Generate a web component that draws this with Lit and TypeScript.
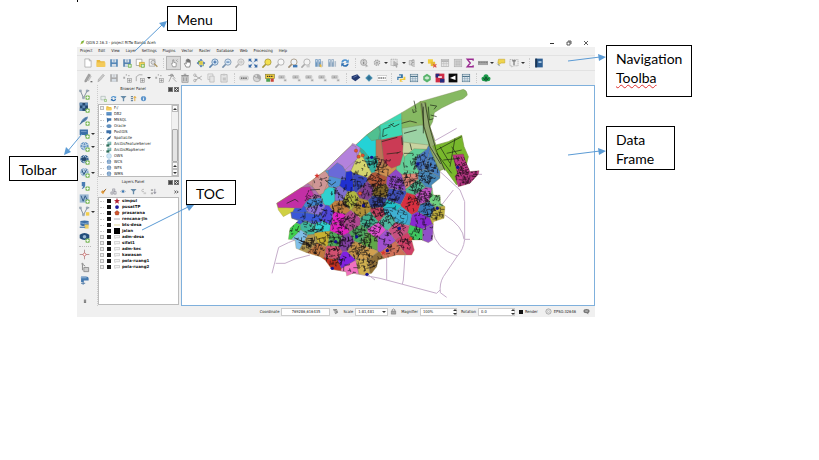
import { LitElement, html, svg, css } from "lit";
import { customElement, property } from "lit/decorators.js";

type Glyph = ReturnType<typeof svg>;

const plus = svg`<rect x="9.5" y="9.5" width="6" height="6" rx="1" fill="#7db95c"/><path d="M12.5 10.5v4M10.5 12.5h4" stroke="#fff" stroke-width="1.2"/>`;
const grayPlus = svg`<rect x="9" y="9" width="6" height="6" fill="#e4e4e4" stroke="#999"/><path d="M12 10v4M10 12h4" stroke="#888"/>`;
const lens = (fill: string, ring: string, mark: Glyph) => svg`<path d="M6 10L1.5 14.5" stroke="${ring}" stroke-width="2.6" stroke-linecap="round"/><circle cx="9.5" cy="6.5" r="5" fill="${fill}" stroke="${ring}" stroke-width="1.3"/>${mark}`;
const floppy = (c: string) => svg`<path d="M2 2h12v12H2z" fill="${c}"/><path d="M4.5 2h7v5h-7z" fill="#e8edf2"/><path d="M4.5 9.5h7V14h-7z" fill="#d5dde5"/><path d="M6 3.5h4M6 5.2h4" stroke="${c}" stroke-width=".8"/>`;
const label = (c: string) => svg`<rect x="1" y="4" width="10" height="5" rx="1" fill="#d8d8d8" stroke="#aaa" stroke-width=".7"/><path d="M2.5 6.5h7" stroke="#666" stroke-width="1.6" stroke-dasharray="1.6 .8"/><path d="M9 9h5v5H9z" fill="${c}"/><path d="M10 11.5h3" stroke="#666"/>`;
const globe = (c: string) => svg`<circle cx="8" cy="7.5" r="6" fill="${c}"/><path d="M3 5q5 3 10 0M2.5 9q5 3 11 0M8 1.5q-5 6 0 12q5-6 0-12" fill="none" stroke="#d9e6f2" stroke-width="1.1"/>`;
const book = (c: string) => svg`<path d="M2 2h4v12H2zM7 2h4v12H7z" fill="${c}"/><path d="M3 4h2M8 4h2M3 6h2M8 6h2" stroke="#fff"/><path d="M12 5h2.5v9H12z" fill="#b2bfcc"/>`;
const vee = svg`<path d="M2 2.5L6.5 13L12 2.5H15" fill="none" stroke="#6f7f8e" stroke-width="1.2"/><path d="M.8 1.3h2.6v2.6H.8zM10.6 1.3h2.6v2.6h-2.6zM5.2 11.6h2.6v2.6H5.2z" fill="#a9b9c8" stroke="#637586" stroke-width=".5"/>`;
const dbase = svg`<path d="M2 3q6-2 12 0v6q-6 2.5-12 0z" fill="#3c6ea5"/><path d="M2 5.5q6 2.5 12 0" stroke="#9fc0e0" fill="none"/>`;
const grid = svg`<rect x="2" y="2" width="12" height="12" fill="#eef3f7" stroke="#4b7188"/><path d="M2 5.5h12" stroke="#4b7188" stroke-width="2"/><path d="M2 9h12M2 11.6h12M6 5v9M10 5v9" stroke="#6f93a8" stroke-width=".8"/>`;

const glyphs: Record<string, Glyph> = {
  page: svg`<path d="M3 1.5h7l3 3v10H3z" fill="#fff" stroke="#999"/><path d="M10 1.5v3h3" fill="none" stroke="#999"/>`,
  folder: svg`<path d="M1 3h5l1.5 2H14v9H1z" fill="#e8b73c"/><path d="M1 7h14v7H1z" fill="#f4cb5a"/>`,
  save: floppy("#4e83b5"),
  saveAs: svg`${floppy("#4f7fae")}${plus}`,
  composer: svg`<path d="M2 2h9v10H2z" fill="#fff" stroke="#888"/><path d="M7 7h8v7H7z" fill="#f2d45c" stroke="#b79a2f"/>${plus}`,
  composers: svg`<path d="M2 2h9v11H2z" fill="#f5f5f5" stroke="#888"/><circle cx="8" cy="7" r="3.2" fill="#ddd" stroke="#888"/><path d="M10 9l5 5" stroke="#a98f53" stroke-width="2"/>`,
  touch: svg`<path d="M6 14L4 9l2-.5V3h1.7v4l4 1.2-.6 5.8z" fill="#fff" stroke="#777"/><path d="M11 3l3 3M13 2l1 1" stroke="#888"/>`,
  hand: svg`<path d="M5 14.5L2.3 9l1.3-1L5.2 9.500V3h1.600v4V1.700h1.700V7V2.400h1.700V7.300V4h1.600v6.500l-1.300 4z" fill="#fff" stroke="#444" stroke-width=".9"/>`,
  pan: svg`<path d="M8 1l3 3.500H5zM8 15l3-3.500H5zM1 8l3.500-3v6zM15 8l-3.500-3v6z" fill="#4673a6"/><path d="M5 5h6v6H5z" fill="#d9c84b"/><path d="M3 4l4 1-3 3zM10 13l3-4-1 4z" fill="#6da34b"/>`,
  zoomIn: lens("#d8e7f5", "#5d84ad", svg`<path d="M7 6.500h5M9.500 4v5" stroke="#2f62a0" stroke-width="1.500"/>`),
  zoomOut: lens("#d8e7f5", "#7590ad", svg`<path d="M7 6.500h5" stroke="#2f62a0" stroke-width="1.500"/>`),
  zoomNative: lens("#eee", "#b0b0b0", svg`<path d="M8 4v5M11 4v5" stroke="#999"/>`),
  zoomFull: svg`<path d="M1 1h5L4.500 3l2 2L5 6.500l-2-2L1 6zM15 1v5l-2-1.500-2 2L9.500 5l2-2L10 1zM1 15v-5l2 1.500 2-2L6.500 11l-2 2L6 15zM15 15h-5l1.500-2-2-2L11 9.500l2 2 2-1.500z" fill="#3a6ca8"/><circle cx="8" cy="8" r="2.300" fill="#c9dbed"/>`,
  zoomSel: lens("#f3e04e", "#a8983a", svg``),
  zoomLayer: lens("#f7f7f7", "#a8a8a8", svg``),
  zoomLast: svg`${lens("#eef3f8", "#a08f78", svg``)}<path d="M8 11h7v4H8z" fill="#3f78b6"/>`,
  zoomNext: svg`${lens("#f3f3f3", "#aaa", svg``)}<path d="M9 11h5v4H9z" fill="#ccc"/>`,
  bookmark: svg`${book("#6d97bf")}<path d="M9 9l3 2v4l-3-1z" fill="#e5b945"/>`,
  bookmarks: book("#8aa5bf"),
  refresh: svg`<path d="M2 7q1-5 6-5q3 0 4.300 2L14 2v5.500H8.800L10.600 5.600Q8 3.500 5.500 5.800L4.700 7z" fill="#4f93cf"/><path d="M14 9q-1 5-6 5q-3 0-4.300-2L2 14V8.500h5.200L5.400 10.400Q8 12.500 10.500 10.200L11.300 9z" fill="#2d6eb0"/>`,
  info: svg`<circle cx="7.500" cy="7" r="5" fill="#d2d2d2" stroke="#999"/><path d="M7.500 6v4M7.500 3.500v1" stroke="#777" stroke-width="1.500"/><path d="M10 9l5 4-3 .5-1 2z" fill="#aaa"/>`,
  gear: svg`<circle cx="8" cy="7.500" r="4" fill="#ddd" stroke="#a2a2a2" stroke-width="2.400" stroke-dasharray="2 1.100"/><circle cx="8" cy="7.500" r="1.500" fill="#999"/>`,
  select: svg`<path d="M1.500 2h10v10h-10z" fill="#e5e5e5" stroke="#999" stroke-dasharray="2 1"/><path d="M6 5l7 5-3 .5 1.500 4-1.500.5-1.500-4L6 13z" fill="#bbb" stroke="#888" stroke-width=".6"/>`,
  selectExp: svg`<path d="M2 4h8v7H2z" fill="#d9d9d9" stroke="#aaa"/><path d="M10 3q-4-1-4 2t3 2q-4 0-3.500 3.500T11 13" fill="none" stroke="#999" stroke-width="1.300"/>`,
  deselect: svg`<path d="M1.500 2h8v7h-8z" fill="#f1cf3e"/><path d="M6 6h7v7H6z" fill="#e6bb35"/><path d="M10 10l5 5M15 10l-5 5" stroke="#dc5347" stroke-width="1.700"/>`,
  table: svg`<rect x="2" y="2.500" width="12" height="11" fill="#e8e8e8" stroke="#aaa"/><path d="M2 5h12" stroke="#b5b5b5" stroke-width="3"/><path d="M2 9h12M6 5v8M10 5v8" stroke="#bbb"/>`,
  calc: svg`<rect x="2" y="2" width="12" height="12" fill="#ddd" stroke="#aaa"/><path d="M4 5h8M4 8h8M4 11h8" stroke="#999" stroke-width="1.500" stroke-dasharray="2 1"/>`,
  sigma: svg`<path d="M13 4.500V2H3.500l5 6-5 6H13v-2.500" fill="none" stroke="#9a2b91" stroke-width="2.200"/>`,
  ruler: svg`<path d="M0 5.500h16v5H0z" fill="#a5a5a5" stroke="#777" stroke-width=".7"/><path d="M2 6v2M5 6v2M8 6v2M11 6v2M14 6v2" stroke="#444" stroke-width=".8"/>`,
  tip: svg`<path d="M4 2h10v6H8l-4 3 .5-3H3z" fill="#efd44e" stroke="#c9ab33"/><path d="M2 9l4 4" stroke="#7d93a8" stroke-width="1.500"/>`,
  text: svg`<path d="M1.500 2.500h13v10h-7l-3 2v-2h-3z" fill="#eee" stroke="#999" stroke-dasharray="2 1"/><path d="M5 4.500h6M8 4.500v7" stroke="#555" stroke-width="1.500"/>`,
  help: svg`<path d="M2 1h12v14H2z" fill="#2e5f93"/><path d="M2 1h3v14H2z" fill="#1c3654"/><path d="M7 5h5v3H7z" fill="#a9c6e0"/>`,
  edits: svg`<path d="M3 12L9 1.500l3 1.500-6 10.500-3 1z" fill="#a5a5a5" stroke="#777" stroke-width=".7"/><path d="M7 12l5-8 2 1-5 8z" fill="#c3c3c3"/><path d="M12 14h3" stroke="#333" stroke-width="1.500"/>`,
  pencil: svg`<path d="M3 14l1-4 7-8 2.500 2-7 8z" fill="#c9c9c9" stroke="#999" stroke-width=".8"/>`,
  saveEdits: floppy("#a8a8a8"),
  addPts: svg`<path d="M2 6h3v3H2zM6 2h2v2H6zM10 3h2v2h-2z" fill="#aaa"/>${grayPlus}`,
  addCurve: svg`<path d="M2 13V6q4-5 10-3" fill="none" stroke="#aaa" stroke-width="1.500"/>${grayPlus}`,
  node: svg`<path d="M3 14L8 3l5 6M2 4h9" stroke="#999" fill="none" stroke-width="1.300"/><path d="M6 2h3v3H6zM9 8l6 6" fill="#bbb" stroke="#888"/>`,
  trash: svg`<path d="M3 5h10v10H3z" fill="#d1d1d1" stroke="#888"/><path d="M2 4h12M6 2h4M6 7v6M10 7v6" stroke="#888" stroke-width="1.400"/>`,
  cut: svg`<path d="M3 4l11 7M3 12l11-7" stroke="#aaa" stroke-width="1.500"/><circle cx="3" cy="3.500" r="2" fill="none" stroke="#999"/><circle cx="3" cy="12" r="2" fill="none" stroke="#999"/>`,
  copy: svg`<path d="M3 1.500h8v9H3z" fill="#ececec" stroke="#b5b5b5"/><path d="M6 5h7v9.500H6z" fill="#e5e5e5" stroke="#b0b0b0"/>`,
  paste: svg`<path d="M3 2.500h10v12H3z" fill="#e5e5e5" stroke="#aaa"/><path d="M6 1h4v3H6zM6 7h5v5H6z" fill="#c5c5c5"/>`,
  abc: svg`<rect x="1" y="5" width="14" height="6" rx="2" fill="#ddd" stroke="#bbb"/><path d="M3 8h10" stroke="#555" stroke-width="2" stroke-dasharray="2.500 1"/>`,
  pie: svg`<circle cx="8" cy="8" r="6" fill="#d7d7d7" stroke="#999"/><path d="M8 8V2A6 6 0 0 1 13 11z" fill="#aaa"/><path d="M8 8L3 5" stroke="#888"/>`,
  labelHi: svg`<rect x="1" y="2" width="14" height="7" fill="#f3cf3c" stroke="#867a2d"/><path d="M3 5.500h10" stroke="#333" stroke-width="2" stroke-dasharray="2 1"/><path d="M2 9h6v5H2z" fill="#50a052"/><path d="M9 9h5v5H9z" fill="#c94539"/>`,
  labelA: label("#ddd"),
  chip: svg`<path d="M1 5l9-3 5 5-8 6-6-4z" fill="#243a70"/><path d="M4 7l6-3" stroke="#6179ae" stroke-width="1.500"/>`,
  diamond: svg`<path d="M8 2l6 6-6 6-6-6z" fill="#4d91b0"/><path d="M8 4.500L11.500 8 8 11.500 4.500 8z" fill="#2f6e93"/>`,
  csw: svg`<rect x="0" y="4" width="16" height="8" fill="#fff" stroke="#bbb"/><path d="M2 8h12" stroke="#777" stroke-width="2.500" stroke-dasharray="2.500 1"/>`,
  python: svg`<path d="M5 2h6v6H4v3H2V6h6V4H5z" fill="#3a77a8"/><path d="M11 14H6V9h6V6h3v5H9v2h2z" fill="#f0c93e"/>`,
  grid,
  green: svg`<path d="M8 1l6 4v6l-6 4-6-4V5z" fill="#58b36b"/><path d="M4 8q4-6 8 0q-4 5-8 0" fill="#cde9d2"/>`,
  plugin: svg`<path d="M1 1h14v14H1z" fill="#cf2c45"/><path d="M1 1h6v6H1zM8 9h7v6H8z" fill="#262b7c"/><path d="M5 5h6v3H5z" fill="#f0d9de"/>`,
  dark: svg`<path d="M1 1h14v14H1z" fill="#0a0a0a"/><path d="M3 8l9-4v7z" fill="#fff"/>`,
  tree: svg`<path d="M1 10q-1-4 3-4q0-4 4-4t4 4q4 0 3 4q0 3-4 3H5q-4 0-4-3z" fill="#1f9b4c"/><path d="M4 8l2 3 2-5 2 5 2-3M8 10v4" stroke="#0c4424" fill="none" stroke-width="1.300"/>`,
  vector: svg`${vee}${plus}`,
  raster: svg`<path d="M1 1h12v12H1z" fill="#23476e"/><path d="M1 1h4v4H1zM9 1h4v4H9zM5 5h4v4H5zM1 9h4v4H1z" fill="#6590bb"/>${plus}`,
  feather: svg`<path d="M1 14Q4 3 13 2Q13 8 5 11z" fill="#5f89b5"/><path d="M1 14L11 4" stroke="#32587f" />${plus}`,
  postgis: svg`<path d="M1 2h12v8l-3 3-2-3H1z" fill="#3b6fa8"/><path d="M3 5h8" stroke="#8db1d5"/>${plus}`,
  elephant: svg`<path d="M1 3h13v8l-4 3-2-3H1z" fill="#3b6fa8"/>`,
  wms: svg`${globe("#6292c0")}${plus}`,
  wcs: svg`${globe("#2f5f8f")}<path d="M4 5h7v5H4z" fill="#24476c"/>${plus}`,
  wfs: svg`${globe("#85aacb")}<path d="M4 4l3 7 4-7" stroke="#28527e" fill="none" stroke-width="1.400"/>${plus}`,
  comma: svg`<path d="M4 3h5v5q0 3-4 5l-1-1q2-1 2-3H4z" fill="#4a7db3"/>${plus}`,
  virtual: svg`<path d="M1 2h13v12H1z" fill="#9ab7d2"/><path d="M3 4l3 8 3-8 4 8" stroke="#355f89" fill="none" stroke-width="1.400"/>${plus}`,
  newVec: svg`${vee}<path d="M10 9h5v5h-5z" fill="#f2ce4b"/>`,
  gps: svg`${dbase}<path d="M8 8h6v6H8z" fill="#efcf64"/><path d="M1 12h8" stroke="#5a86b3" stroke-width="2"/>`,
  globeDark: svg`<path d="M1 4q7-5 14 0v5q-7 5-14 0z" fill="#234e7b"/><circle cx="8" cy="7" r="2.600" fill="#97b6d3"/>${plus}`,
  cross: svg`<path d="M8 1v5M8 10v5M1 8h5M10 8h5" stroke="#b38b8b" stroke-width="1.300"/><circle cx="8" cy="8" r="2" fill="#fff" stroke="#c55"/>`,
  snap: svg`<path d="M5 2v10M5 3l4 3" stroke="#888" stroke-width="1.400" fill="none"/><circle cx="5" cy="2.500" r="1.500" fill="#999"/><path d="M7 8h7v6H7z" fill="#ccc" stroke="#777"/>`,
  dbTool: svg`<path d="M3 2h7q4 0 4 3v3H7v2H3z" fill="#4479b0"/><path d="M2 4h9" stroke="#b5cfe8"/><path d="M6 10v4M3 12h6" stroke="#567ea9" stroke-width="1.500"/>`,
  addLayer: svg`<path d="M2 3h10v8H2z" fill="#e8eeea" stroke="#899"/>${plus}`,
  filter: svg`<path d="M1 2h14L9.500 8v6h-3V8z" fill="#678ba8"/>`,
  collapse: svg`<path d="M2 2h5v3H2zM2 7h5v2H2zM2 11h5v3H2z" fill="#6b87a0"/><path d="M11 14V4M8.500 7L11 3l3 4" stroke="#e0a32e" stroke-width="2" fill="none"/>`,
  about: svg`<circle cx="8" cy="8" r="6" fill="#5e95cb"/><path d="M8 7v5M8 4v1.500" stroke="#fff" stroke-width="1.800"/>`,
  brush: svg`<path d="M2 9l5 5L14 3l-5 4-3-2z" fill="#e09b3d"/><path d="M8 8l6-6" stroke="#8f5b2a" stroke-width="2"/>`,
  group: svg`<path d="M2 9h5v5H2zM6 2h5v5H6zM9 8h5v6H9z" fill="#e2e2e2" stroke="#667"/>`,
  eye: svg`<path d="M1 8q6-7 12 0q-6 6-12 0" fill="#dde6ee" stroke="#8895a2"/><circle cx="7" cy="8" r="2.600" fill="#3a78b5"/>`,
  expr: svg`<path d="M9 3Q4 2 4 6t5 2" fill="none" stroke="#aaa" stroke-width="1.600"/><path d="M8 10h6v4H8z" fill="#ccc"/>`,
  expand: svg`<path d="M2 3h5v4H2zM2 10h5v4H2z" fill="#aaa"/><path d="M11 2v10M8.500 9L11 13l3-4" stroke="#778" stroke-width="1.600" fill="none"/>`,
  db: svg`<path d="M1 3h14v9H1z" fill="#4f86be"/><path d="M1 6h14" stroke="#9cc0e4"/>`,
  flag: svg`<path d="M2 1l3 2h9v7H8l-5 5z" fill="#3f72a8"/>`,
  disk: svg`<ellipse cx="8" cy="8" rx="7" ry="5" fill="#5586b8"/><path d="M2 8h12" stroke="#a9c7e4"/>`,
  quill: svg`<path d="M1 15L5 7l9-6-3 8z" fill="#36658f"/>`,
  arc: svg`<path d="M4 2h10v9H4z" fill="#69a8a1"/><path d="M1 9h8v6H1z" fill="#2f6c58"/><path d="M6 5h6" stroke="#e6f2f0" stroke-width="2"/>`,
  ows: svg`<circle cx="8" cy="8" r="6.500" fill="#cfe6f6" stroke="#7eb3d8"/>`,
  world: globe("#4d7fb3"),
  star: svg`<path d="M8 0l2.200 5.600 5.800.3-4.500 3.700 1.500 6L8 12.300 3 15.600l1.500-6L0 5.900l5.800-.3z" fill="#b21f30"/>`,
  dot: svg`<circle cx="8" cy="8" r="5" fill="#1d1a9c"/>`,
  hex: svg`<path d="M8 1.500l6 4.500-2 7H4L2 6z" fill="#d2552f" stroke="#7a2f18"/>`,
  lineGray: svg`<path d="M0 8h16" stroke="#8a8a9a" stroke-width="1.800"/>`,
  lineGold: svg`<path d="M0 8h16" stroke="#d3c36a" stroke-width="1.800"/>`,
  square: svg`<path d="M0 0h16v16H0z" fill="#000"/>`,
  poly: svg`<path d="M1 4h14v6H6l-4 2z" fill="#f4f4f4" stroke="#999"/>`,
  lock: svg`<path d="M3 7h10v7H3z" fill="#a8a8a8" stroke="#666"/><path d="M5 7V4q3-4 6 0v3" fill="none" stroke="#777" stroke-width="1.600"/>`,
  extent: svg`<path d="M2 3l9-1 3 8-6 4z" fill="#888"/><path d="M4 5l6 7M4 9l8-4" stroke="#eee"/>`,
  crs: svg`<circle cx="8" cy="8" r="6" fill="#eee" stroke="#888" stroke-width="1.500"/><circle cx="8" cy="8" r="2.500" fill="none" stroke="#999"/>`,
  bubble: svg`<ellipse cx="8" cy="7" rx="7" ry="5" fill="#777"/><path d="M8 11l4 4v-5z" fill="#777"/><path d="M5 7h6" stroke="#fff" stroke-width="1.500"/>`,
  logo: svg`<path d="M2 13L5 4l9-3-4 9z" fill="#69b33f"/><path d="M2 14l8-9" stroke="#d9b92e" stroke-width="2"/>`,
  chevrons: svg`<path d="M3 6l4 3-4 3M8 6l4 3-4 3" stroke="#333" stroke-width="1.600" fill="none"/>`,
  more: svg`<path d="M5 3h6M5 6h6M5 9h6" stroke="#333" stroke-width="1.800"/>`,
};

const icon = (name: string) => html`<svg class="icon" viewBox="0 0 16 16" aria-hidden="true">${glyphs[name]}</svg>`;

/* A leading "v:" on a name gives the tool a drop-down arrow. */
interface ToolGroup { width: number; tools: string[]; }

const navGroups: ToolGroup[] = [
  { width: 79, tools: "page folder save saveAs composer composers".split(" ") },
  { width: 186, tools: "touch hand pan zoomIn zoomOut zoomNative zoomFull zoomSel zoomLayer zoomLast zoomNext bookmark bookmarks refresh".split(" ") },
  { width: 168, tools: "info v:gear v:select v:selectExp deselect table calc sigma v:ruler tip v:text".split(" ") },
  { width: 13, tools: ["help"] },
];
const editGroups: ToolGroup[] = [
  { width: 150, tools: "edits pencil saveEdits addPts v:addCurve addPts node trash cut copy paste".split(" ") },
  { width: 106, tools: "abc pie labelHi labelA labelA labelA labelA labelA".split(" ") },
  { width: 39, tools: "chip diamond csw".split(" ") },
  { width: 79, tools: "python grid green plugin dark grid".split(" ") },
  { width: 13, tools: ["tree"] },
];
const layerTools = "vector raster feather v:postgis v:wms wcs v:wfs comma virtual v:newVec gps globeDark".split(" ");
const extraTools = "cross snap dbTool".split(" ");

const menus = ["Project", "Edit", "View", "Layer", "Settings", "Plugins", "Vector", "Raster", "Database", "Web", "Processing", "Help"];
const sources: [string, string][] = [
  ["folder", "F:/"], ["db", "DB2"], ["flag", "MSSQL"], ["disk", "Oracle"], ["elephant", "PostGIS"], ["quill", "SpatiaLite"],
  ["arc", "ArcGisFeatureServer"], ["arc", "ArcGisMapServer"], ["ows", "OWS"], ["world", "WCS"], ["world", "WFS"], ["world", "WMS"],
];
const layers: [string, string][] = [
  ["star", "simpul"], ["dot", "pusatTP"], ["hex", "prasarana"], ["lineGray", "rencana-jln"], ["lineGold", "bts-desa"], ["square", "jalan"],
  ["poly", "adm-desa"], ["poly", "sifat1"], ["poly", "adm-kec"], ["poly", "kawasan"], ["poly", "pola-ruang1"], ["poly", "pola-ruang2"],
];

/* Map: each district is a cell around its centre; the last number is street density. */
type Point = [number, number];
const districts: [number, number, string, number][] = [
  [45, 205, "#cfd043", 0], [128, 168, "#b06fb0", 5], [155, 130, "#cf9090", 3], [190, 120, "#4f93d6", 0], [225, 60, "#b482dc", 0],
  [280, 85, "#d4d56e", 7], [180, 165, "#30d0d0", 1], [210, 165, "#8070d0", 8], [235, 130, "#2030d0", 2], [265, 128, "#3848b8", 8],
  [130, 185, "#4088d0", 7], [135, 210, "#8a70d8", 9], [170, 230, "#5048d8", 8], [90, 228, "#3a58d8", 2], [125, 235, "#4a60d8", 3],
  [70, 270, "#40d050", 3], [92, 292, "#80c0e8", 7], [115, 262, "#40b8a0", 7], [155, 260, "#30d0d0", 8], [205, 235, "#e020c0", 13],
  [208, 265, "#e020c0", 9], [238, 180, "#b0b840", 15], [212, 200, "#c08040", 12], [243, 243, "#b04890", 16], [275, 205, "#b09038", 15],
  [308, 70, "#30b0a0", 14], [338, 80, "#d09050", 14], [320, 125, "#b05838", 16], [290, 150, "#804090", 10], [330, 155, "#806828", 18],
  [325, 185, "#3848a0", 20], [375, 165, "#4050b8", 20], [380, 130, "#9048c8", 20], [422, 118, "#e08878", 16], [420, 85, "#62cf98", 4],
  [450, 65, "#4878c0", 16], [490, 75, "#4880c0", 16], [468, 115, "#4888b8", 16], [440, 140, "#50b890", 14], [460, 168, "#c050c0", 18],
  [425, 190, "#d83040", 10], [500, 178, "#70d080", 10], [505, 222, "#c0b040", 12], [472, 208, "#3878b8", 12], [453, 243, "#8828d0", 8],
  [328, 220, "#c04060", 16], [300, 242, "#40b090", 14], [352, 240, "#50b8a0", 12], [392, 232, "#40a8d0", 5], [360, 205, "#20c0c8", 5],
  [440, 285, "#40c860", 8], [475, 285, "#9050c8", 3], [318, 272, "#e050d0", 10], [345, 300, "#a050d0", 8], [385, 270, "#c85080", 13],
  [408, 305, "#d04068", 14], [370, 335, "#d07058", 8], [270, 285, "#50a860", 15], [298, 300, "#60a848", 13], [195, 298, "#50a858", 15],
  [158, 292, "#c8b030", 8], [120, 308, "#b09850", 15], [140, 330, "#c07840", 15], [192, 340, "#d05070", 14], [185, 375, "#c03020", 7],
  [228, 310, "#8040a0", 13], [228, 358, "#8020e0", 6], [245, 388, "#f070c0", 4], [283, 340, "#d0a050", 12], [282, 380, "#d0b050", 6],
  [312, 375, "#907038", 12], [255, 330, "#c09048", 12],
];
const coast: Point[] = [
  [20, 190], [95, 142], [130, 118], [165, 92], [200, 58], [245, 15], [247, 10], [258, 14], [290, -15], [330, -45], [395, -62], [470, -40], [480, 0], [495, 40],
  [510, 75], [510, 115], [485, 135], [490, 165], [510, 165], [512, 190], [525, 200], [522, 235], [490, 245], [488, 300], [475, 308], [455, 300], [425, 300],
  [433, 330], [425, 345], [380, 345], [325, 360], [320, 380], [305, 400], [285, 405], [250, 400], [230, 408], [228, 395], [185, 388],
  [165, 360], [150, 350], [110, 338], [78, 325], [75, 300], [55, 298], [60, 265], [85, 242], [65, 235], [62, 218], [40, 230], [25, 210],
];
const zones: [string, string][] = [
  ["M20 190L95 142L120 140L132 165L108 185L95 205L48 203L25 203Z", "#c22fa5"],
  ["M62 216L105 218L155 226L155 248L108 242L66 235Z", "#3a58d8"],
  ["M130 118L165 92L178 108L172 130L160 160L148 165L128 140Z", "#cf9696"],
  ["M165 92L200 58L245 15L258 20L262 56L225 90L200 70L180 90Z", "#b482dc"],
  ["M175 92L202 68L218 78L228 95L225 120L205 115L175 108Z", "#6a6ad8"],
  ["M258 14L290 -15L325 -40L318 -2L318 50L298 52L280 30Z", "#24d2d6"],
  ["M290 -15L325 -40L330 -25L325 -2L305 2Z", "#50c090"],
  ["M318 0L334 -2L340 55L335 85L318 50Z", "#b97558"],
  ["M330 -45L395 -82L398 -12L334 0Z", "#3dd8b4"],
  ["M334 0L396 -14L402 35L397 50L390 75L365 85L342 68Z", "#cb3b55"],
  ["M395 -82L450 -115L580 -152Q592 -148 592 -135Q580 -120 560 -118L515 -96L493 -82L488 -55L478 -35L396 -22Z", "#86b962"],
  ["M396 -35L465 -47L478 -12L476 18L400 8Z", "#9bd2a4"],
  ["M400 6L476 15L470 28L430 30L405 55L398 35Z", "#c9d3a0"],
  ["M404 50L432 26L470 28L440 50L432 95L402 90Z", "#62cf98"],
];
const eastZones: [string, string][] = [
  ["M450 -115L468 -112L478 -45L512 60L528 85L508 92L482 30L462 -35Z", "#93aa70"],
  ["M488 18L535 5L575 -14L582 20L595 50L585 90L560 135L520 80Z", "#78b82c"],
];
const eastTown = "M548 45L580 42L585 60L600 95L627 92L625 102L600 130L565 140L555 110L562 100Z";
const roads = [
  "M6 400L20 345L26 322L55 308L80 298", "M17 370H45L75 357L120 345", "M480 -38L495 2L560 -35", "M505 90L570 150L584 185V298H600",
  "M584 298Q580 330 562 348L520 410Q508 430 511 458L530 472", "M510 450L500 460L330 415L190 388",
  "M488 270Q495 325 562 348", "M525 225Q580 260 582 298", "M515 195L550 150", "M350 350V420", "M405 345L400 420L397 432", "M295 405L315 420", "M620 103H636",
];
const blackRoads = [
  "M455 -110L462 -40L480 20L512 72", "M465 -112L478 -42L498 30L525 92", "M395 -8L397 15M335 5L382 -8M355 -42L372 -50M380 40L392 35",
  "M362 -40L340 -32L338 -10L352 -16M362 -48L372 -40L388 -48M402 -20L440 -30M420 10L425 30M440 -85L435 -92M428 -92L430 -82L438 -85",
  "M402 40H430M350 42L385 38M432 -118L438 -92M460 -100V-20M475 -100L478 -60M480 -105L500 -102L492 -92M395 -50L420 -57L440 -52M478 -60L490 -64M482 -75L500 -70",
  "M500 30L575 -10M510 20L540 70M530 40L575 30M520 60L570 55M555 -5L540 80M500 40L545 100M545 20L560 42",
  "M50 190L75 178L85 185M105 215V235M165 120L185 135L198 125M120 150L150 148",
];
const capitals: Point[] = [[305, 52], [153, 196], [280, 197], [444, 72], [563, 82], [502, 205], [388, 265], [197, 305], [352, 332], [187, 385], [291, 403], [260, 290]];
const facilities: Point[] = [[258, 32], [266, 50], [278, 46], [270, 160], [422, 296]];
const hubs: Point[] = [[141, 107], [340, 338]];

const toPath = (points: Point[]) => `M${points.map((p) => p.join(" ")).join("L")}Z`;

/* Cuts the starting box down to the part nearer to district i than to any other. */
function cell(i: number): Point[] {
  let poly: Point[] = [[0, -80], [550, -80], [550, 420], [0, 420]];
  const [ax, ay] = districts[i];
  districts.forEach(([bx, by], j) => {
    if (i === j) return;
    const side = (p: Point) => (p[0] - (ax + bx) / 2) * (bx - ax) + (p[1] - (ay + by) / 2) * (by - ay);
    const next: Point[] = [];
    poly.forEach((p, k) => {
      const q = poly[(k + 1) % poly.length];
      const a = side(p), b = side(q);
      if (a <= 0) next.push(p);
      if (a * b < 0) {
        const t = a / (a - b);
        next.push([Math.round(p[0] + (q[0] - p[0]) * t), Math.round(p[1] + (q[1] - p[1]) * t)]);
      }
    });
    poly = next;
  });
  return poly;
}

function streets(centres: [number, number, number][]): string {
  let seed = 7;
  const rnd = () => ((seed = (seed * 16807) % 2147483647) / 2147483647);
  let d = "";
  for (const [x, y, n] of centres) {
    const tilt = rnd() * 0.9 - 0.45;
    for (let i = 0; i < n * 1.7; i++) {
      const turn = tilt + (rnd() > 0.5 ? Math.PI / 2 : 0);
      const px = x + (rnd() - 0.5) * 42 - 4, py = y + (rnd() - 0.5) * 40 - 4;
      const l = 4 + rnd() * 11, s = (rnd() - 0.5) * 14;
      const c = Math.cos(turn), q = Math.sin(turn);
      d += `M${px.toFixed(0)} ${py.toFixed(0)}l${(c * l).toFixed(0)} ${(q * l).toFixed(0)}l${(-q * s).toFixed(0)} ${(c * s).toFixed(0)}`;
    }
  }
  return d;
}

@customElement("city-map")
class CityMap extends LitElement {
  static styles = css`
    :host { display: block; min-width: 0; background: #fff; }
    .map { display: block; width: 100%; height: 100%; }
  `;
  render() {
    return html`<svg class="map" viewBox="-264 -162 1236 657" role="img" aria-label="District map of Banda Aceh">
      <defs><clipPath id="city"><path d=${toPath(coast)} /></clipPath><clipPath id="town"><path d=${eastTown} /></clipPath></defs>
      <g fill="none" stroke="#c6aecb" stroke-width="3">${roads.map((d) => svg`<path d=${d} />`)}</g>
      <g clip-path="url(#city)">
        ${districts.map((d, i) => svg`<path d=${toPath(cell(i))} fill=${d[2]} stroke="#6b6848" stroke-width="1" />`)}
      </g>
      <g stroke="#777b50" stroke-width="1">${zones.map(([d, fill]) => svg`<path d=${d} fill=${fill} />`)}</g>
      <path d="M340 205Q372 198 380 210T410 218Q418 235 405 252L380 235L345 222Z" fill="#3fb0d2" stroke="#207080" stroke-width="2" />
      <g clip-path="url(#city)"><path d=${streets(districts.map(([x, y, , n]) => [x, y, n]))} fill="none" stroke="#120e14" stroke-width="2" opacity=".85" /></g>
      <path d=${toPath(coast)} fill="none" stroke="#a89858" stroke-width="1" />
      <g stroke="#77933c" stroke-width="2">${eastZones.map(([d, fill]) => svg`<path d=${d} fill=${fill} />`)}</g>
      <path d=${eastTown} fill="#b83684" stroke="#704030" stroke-width="1" />
      <g clip-path="url(#town)"><path d=${streets([[572, 65, 10], [580, 95, 14], [590, 115, 14], [608, 108, 8]])} fill="none" stroke="#2a1020" stroke-width="2" /></g>
      <g fill="none" stroke="#1b2414" stroke-width="2">${blackRoads.map((d) => svg`<path d=${d} />`)}</g>
      ${capitals.map(([x, y]) => svg`<circle cx=${x} cy=${y} r="5" fill="#14148c" />`)}
      ${facilities.map(([x, y]) => svg`<circle cx=${x} cy=${y} r="5" fill="#e2542c" stroke="#8a2d18" />`)}
      ${hubs.map(([x, y]) => svg`<path transform="translate(${x - 8} ${y - 8})" d="M8 0l2 5.600 6 .3-4.500 3.700 1.500 6L8 12.300 3 15.600l1.500-6L0 5.900l6-.3z" fill="#d6372f" />`)}
    </svg>`;
  }
}

@customElement("gis-window")
class GisWindow extends LitElement {
  static styles = css`
    :host { display: block; background: #f0f0f0; font: 4px/6px "DejaVu Sans Condensed", "DejaVu Sans", sans-serif; color: #222; }
    * { box-sizing: border-box; }
    button { border: 0; padding: 0; margin: 0; background: none; font: inherit; color: inherit; display: flex; align-items: center; justify-content: center; }
    ul { list-style: none; margin: 0; padding: 0; }
    .icon { width: 10px; height: 10px; flex: none; display: block; }
    .title { display: flex; align-items: center; height: 9px; background: #fff; padding: 0 4px 0 3px; }
    .title .icon { width: 5px; height: 5px; margin-right: 1px; }
    .title .name { flex: 1; }
    .controls { display: flex; gap: 7px; }
    .controls button { width: 10px; height: 8px; }
    .controls .icon { width: 6px; height: 6px; margin: 0; }
    .menus { display: flex; gap: 6px; height: 8px; padding: 0 3px; align-items: center; }
    .bar { display: flex; align-items: center; height: 15px; padding-left: 4px; gap: 3px; border-top: 1px solid #e2e2e2; }
    .group { display: flex; align-items: center; flex: none; }
    .tool { flex: 1 1 0; height: 14px; min-width: 0; }
    .tool.menu { flex-grow: 1.4; gap: 2px; }
    .tool.on { background: #dadada; border: 1px solid #b4b4b4; }
    .caret { width: 0; height: 0; border: 2px solid transparent; border-top-color: #333; border-bottom: 0; flex: none; }
    .rule { border-left: 1px dotted #ccc; height: 10px; margin-right: -1px; }
    .work { display: grid; grid-template-columns: 20px 84px minmax(0, 1fr); }
    .side { display: flex; flex-direction: column; padding: 3px 0 0 2px; }
    .side .tool { flex: none; height: 13px; width: 18px; justify-content: flex-start; gap: 1px; }
    .side .tool .icon { width: 11px; height: 11px; }
    .side hr { border: 0; border-top: 1px dotted #bbb; width: 12px; margin: 2px 0 1px; }
    .side .more { width: 12px; margin-top: 12px; }
    .more .icon { width: 6px; height: 6px; }
    .docks { display: flex; flex-direction: column; gap: 1px; border-left: 1px dotted #ccc; }
    .head { display: flex; align-items: center; height: 8px; padding-right: 1px; }
    .head .name { flex: 1; text-align: center; }
    .head button { width: 5px; height: 5px; border: 1px solid #777; margin-right: 1px; background: #ddd; }
    .head .icon { width: 3px; height: 3px; }
    .tools { display: flex; align-items: center; height: 11px; }
    .tools button { width: 10px; height: 10px; }
    .tools .icon { width: 7px; height: 7px; }
    .tools .end { margin-left: auto; }
    .box { display: flex; background: #fff; border: 1px solid #bbb; margin-right: 2px; overflow: hidden; }
    .box ul { flex: 1; }
    .sources { height: 73px; }
    .layers { height: 108px; }
    .row { display: flex; align-items: center; height: 6px; padding-left: 1px; }
    .row .icon { width: 6px; height: 6px; margin-right: 2px; }
    .row label { font-weight: bold; font-family: "DejaVu Sans", sans-serif; color: #111; display: flex; align-items: center; }
    .row label .icon { margin: 0 2px 0 1px; }
    .branch { width: 4px; border-top: 1px dotted #ccc; margin-right: 2px; }
    .branch.plus { height: 4px; border: 1px solid #bbb; background: #eee; }
    .check { appearance: none; width: 4px; height: 4px; margin: 0 2px 0 1px; background: #111; flex: none; }
    .scroll { width: 7px; display: flex; flex-direction: column; background: #f1f1f1; border-left: 1px solid #ddd; }
    .scroll button { height: 7px; border: 1px solid #bbb; background: #fafafa; }
    .scroll .thumb { height: 33px; margin-top: 17px; border: 1px solid #aaa; background: #e4e4e4; border-radius: 1px; }
    .up { transform: rotate(180deg); }
    .frame { border: 1px solid #7fb0dc; background: #fff; height: 221px; min-width: 0; }
    .frame city-map { height: 100%; }
    .status { display: flex; align-items: center; justify-content: flex-end; height: 11px; padding: 0 5px; gap: 2px; }
    .status label { display: flex; align-items: center; gap: 2px; }
    .status .check { margin: 0; }
    .status .icon { width: 7px; height: 7px; }
    .status input:not(.check), .status select { appearance: none; width: 37px; height: 8px; border: 1px solid #ccc; background: #fff; font: inherit; color: inherit; padding: 0 2px; margin: 0; border-radius: 0; }
    .status .coord input { width: 49px; text-align: center; }
    .status .pick { position: relative; display: flex; align-items: center; }
    .status .pick select { width: 33px; }
    .status .pick .caret { position: absolute; right: 2px; }
    .spin { display: flex; flex-direction: column; gap: 2px; margin-left: -6px; }
    .gap { margin-left: 2px; }
    .apart { margin-left: 5px; }
  `;

  private tool(name: string, on = false) {
    const menu = name.startsWith("v:");
    const key = menu ? name.slice(2) : name;
    return html`<button class="tool ${menu ? "menu" : ""} ${on ? "on" : ""}" aria-label=${key}>${icon(key)}${menu ? html`<span class="caret"></span>` : ""}</button>`;
  }

  private bar(groups: ToolGroup[]) {
    return html`<div class="bar" role="toolbar">${groups.map((g, i) => html`${i ? html`<span class="rule"></span>` : ""}
      <div class="group" style="width:${g.width}px">${g.tools.map((t) => this.tool(t, t === "touch"))}</div>`)}</div>`;
  }

  private head(name: string) {
    return html`<div class="head"><span class="name">${name}</span>
      <button aria-label="Float ${name}"><svg class="icon" viewBox="0 0 3 3"><path d="M0 0h3v3H0z" fill="#444" /></svg></button>
      <button aria-label="Close ${name}"><svg class="icon" viewBox="0 0 3 3"><path d="M0 0l3 3M3 0L0 3" stroke="#444" /></svg></button></div>`;
  }

  private tools(names: string[]) {
    return html`<div class="tools">${names.map((n) => html`<button class=${n === "chevrons" ? "end" : ""} aria-label=${n}>${icon(n)}</button>`)}</div>`;
  }

  render() {
    return html`
      <div class="title">${icon("logo")}<span class="name">QGIS 2.16.3 - project RtTw Banda Aceh</span>
        <div class="controls">
          <button aria-label="Minimize"><svg class="icon" viewBox="0 0 6 6"><path d="M1 3.500h4" stroke="#333" /></svg></button>
          <button aria-label="Restore"><svg class="icon" viewBox="0 0 6 6"><path d="M1 2h3v3H1zM2 1h3v3" fill="none" stroke="#333" stroke-width=".8" /></svg></button>
          <button aria-label="Close"><svg class="icon" viewBox="0 0 6 6"><path d="M1 1l4 4M5 1L1 5" stroke="#333" stroke-width=".8" /></svg></button>
        </div></div>
      <nav class="menus">${menus.map((m) => html`<button>${m}</button>`)}</nav>
      ${this.bar(navGroups)}${this.bar(editGroups)}
      <div class="work">
        <div class="side" role="toolbar">${layerTools.map((t) => this.tool(t))}<hr />${extraTools.map((t) => this.tool(t))}
          <button class="more" aria-label="More tools">${icon("more")}</button></div>
        <div class="docks">
          <section>${this.head("Browser Panel")}${this.tools(["addLayer", "refresh", "filter", "collapse", "about"])}
            <div class="box sources"><ul>${sources.map(([g, t], i) => html`<li class="row"><span class="branch ${i ? "" : "plus"}"></span>${icon(g)}${t}</li>`)}</ul>
              <div class="scroll"><button aria-label="Scroll up"><span class="caret up"></span></button><div class="thumb"></div>
                <button aria-label="Previous"><span class="caret up"></span></button><button aria-label="Scroll down"><span class="caret"></span></button></div></div></section>
          <section>${this.head("Layers Panel")}${this.tools(["brush", "group", "eye", "filter", "expr", "expand", "chevrons"])}
            <div class="box layers"><ul>${layers.map(([g, t], i) => html`<li class="row"><span class="branch ${i > 5 ? "plus" : ""}"></span><label><input class="check" type="checkbox" checked />${icon(g)}${t}</label></li>`)}</ul></div></section>
        </div>
        <main class="frame"><city-map></city-map></main>
      </div>
      <footer class="status">
        <label class="coord">Coordinate<input value="769286,616435" /></label>${icon("extent")}
        <label class="gap">Scale<span class="pick"><select><option>1:81,481</option></select><span class="caret"></span></span></label>${icon("lock")}
        <label class="gap">Magnifier<input value="100%" /><span class="spin"><span class="caret up"></span><span class="caret"></span></span></label>
        <label class="gap">Rotation<input value="0.0" /><span class="spin"><span class="caret up"></span><span class="caret"></span></span></label>
        <label class="gap"><input class="check" type="checkbox" checked />Render</label>
        <span class="apart">${icon("crs")}</span><span>EPSG:32646</span><span class="apart">${icon("bubble")}</span>
      </footer>`;
  }
}

@customElement("call-out")
class CallOut extends LitElement {
  @property() arrow = "";
  @property() head = "";
  static styles = css`
    :host { position: absolute; display: block; box-sizing: border-box; border: 1px solid #000; background: #fff; font: 14px/19px Lato, sans-serif; color: #000; padding: 3px 9px; }
    .arrow { position: absolute; left: -1px; top: -1px; width: 1px; height: 1px; overflow: visible; }
  `;
  render() {
    return html`<slot></slot><svg class="arrow" aria-hidden="true"><path d=${this.arrow} stroke="#5b9bd5" /><path d=${this.head} fill="#5b9bd5" /></svg>`;
  }
}

@customElement("app-root")
class AppRoot extends LitElement {
  static styles = css`
    :host { display: block; background: #fff; min-height: 100vh; }
    .figure { position: relative; margin: 0 224px 0 77px; padding-top: 38px; }
    .mark { position: absolute; left: 0; top: 0; width: 1px; height: 2px; background: #000; }
    .menu { left: 90px; top: 6px; width: 70px; height: 25px; }
    .bar { left: -68px; top: 156px; width: 69px; height: 25px; }
    .toc { left: 109px; top: 180px; width: 50px; height: 25px; }
    .nav { left: calc(100% + 11px); top: 45px; width: 86px; height: 52px; }
    .data { left: calc(100% + 11px); top: 126px; width: 69px; height: 44px; }
    .typo { text-decoration: underline wavy #e03030 1px; }
  `;
  render() {
    return html`<div class="figure">
      <span class="mark"></span>
      <gis-window></gis-window>
      <call-out class="menu" arrow="M-32 45L-5 19" head="M0 15L-3 22L-8 17Z">Menu</call-out>
      <call-out class="nav" arrow="M-38 16L-6 12" head="M0 12L-7 16L-8 9Z">Navigation<br /><span class="typo">Toolba</span></call-out>
      <call-out class="data" arrow="M-38 29L-6 25" head="M0 25L-7 29L-8 22Z">Data<br />Frame</call-out>
      <call-out class="bar" arrow="M73 -22L58 -4" head="M55 -1L57 -9L62 -4Z">Tolbar</call-out>
      <call-out class="toc" arrow="M-44 50L2 27" head="M8 25L3 31L0 25Z">TOC</call-out>
    </div>`;
  }
}
